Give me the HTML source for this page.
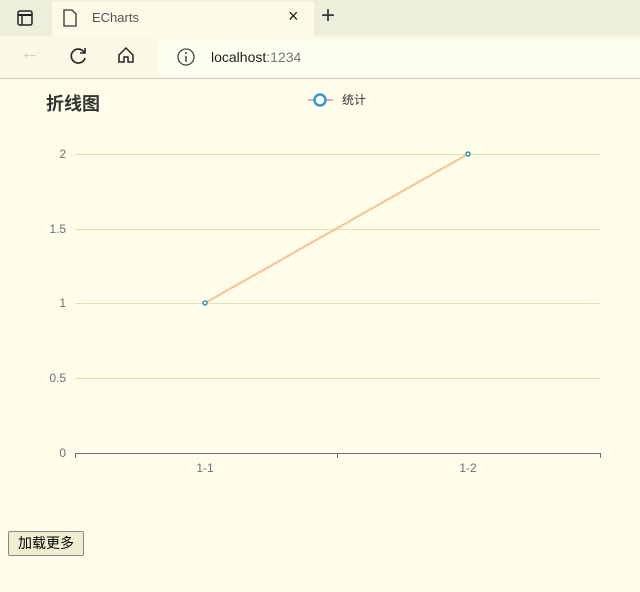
<!DOCTYPE html>
<html><head><meta charset="utf-8"><style>
body{margin:0;width:640px;height:592px;background:#fdfdea;font-family:"Liberation Sans","Noto Sans CJK SC",sans-serif;position:relative;overflow:hidden}
.tabs{position:absolute;top:0;left:0;width:640px;height:36px;background:#eeeedd}
.tab{position:absolute;left:52px;top:2px;width:262px;height:34px;background:#fbfbe8}
.nav{position:absolute;top:36px;left:0;width:640px;height:42px;background:#f9f9e6;border-bottom:1px solid #c8c8c0}
.url{position:absolute;left:158px;top:3px;width:482px;height:36px;background:#fdfdf0}
.t{position:absolute;white-space:nowrap}
</style></head><body>
<div class="tabs">
 <svg class="t" style="left:17px;top:10px" width="16" height="16"><rect x="1" y="1" width="14" height="14" rx="2" fill="none" stroke="#222" stroke-width="1.5"/><line x1="1" y1="5" x2="15" y2="5" stroke="#222" stroke-width="2"/><line x1="5" y1="5" x2="5" y2="15" stroke="#222" stroke-width="1.5"/></svg>
 <div class="tab">
  <svg class="t" style="left:11px;top:7px" width="14" height="18"><path d="M1 1h8l4 4v12H1z" fill="none" stroke="#333" stroke-width="1.3"/></svg>
  <div class="t" style="left:40px;top:8px;font-size:13px;color:#555">ECharts</div>
  <div class="t" style="left:236px;top:4px;font-size:18px;color:#222">×</div>
 </div>
 <div class="t" style="left:321px;top:2px;font-size:24px;color:#333;font-weight:300">+</div>
</div>
<div class="nav">
 <div class="t" style="left:20px;top:6px;font-size:20px;color:#ccc">←</div>
 <svg class="t" style="left:68px;top:10px" width="20" height="20"><path d="M16 6A7 7 0 1 0 17 12" fill="none" stroke="#222" stroke-width="1.6"/><path d="M17 2v5h-5" fill="none" stroke="#222" stroke-width="1.6"/></svg>
 <svg class="t" style="left:117px;top:10px" width="18" height="18"><path d="M2 9L9 2l7 7v7h-5v-5H7v5H2z" fill="none" stroke="#222" stroke-width="1.5"/></svg>
 <div class="url">
  <svg class="t" style="left:18px;top:8px" width="20" height="20"><circle cx="10" cy="10" r="8" fill="none" stroke="#444" stroke-width="1.3"/><line x1="10" y1="9" x2="10" y2="15" stroke="#444" stroke-width="1.5"/><circle cx="10" cy="6" r="1" fill="#444"/></svg>
  <div class="t" style="left:53px;top:10px;font-size:14px;color:#222">localhost<span style="color:#777">:1234</span></div>
 </div>
</div>
<div class="t" style="left:46px;top:90px;font-size:18px;font-weight:bold;color:#333">折线图</div>
<svg class="t" style="left:0;top:0" width="640" height="592">
 <line x1="308" y1="100" x2="333" y2="100" stroke="#f4a0b8" stroke-width="2"/>
 <circle cx="320" cy="100" r="5.5" fill="#fff" stroke="#2e9bd6" stroke-width="2.5"/>
 <g stroke="#e0e0b0" stroke-width="1">
 <line x1="75" y1="154.5" x2="600" y2="154.5"/><line x1="75" y1="229.5" x2="600" y2="229.5"/><line x1="75" y1="303.5" x2="600" y2="303.5"/><line x1="75" y1="378.5" x2="600" y2="378.5"/></g>
 <g stroke="#6e7079" stroke-width="1"><line x1="75" y1="453.5" x2="600" y2="453.5"/><line x1="75.5" y1="453" x2="75.5" y2="458"/><line x1="337.5" y1="453" x2="337.5" y2="458"/><line x1="600.5" y1="453" x2="600.5" y2="458"/></g>
 <line x1="205" y1="303" x2="468" y2="154" stroke="#fdc08e" stroke-width="2"/>
 <circle cx="205" cy="303" r="2" fill="#fff" stroke="#2e9bb0" stroke-width="1.5"/>
 <circle cx="468" cy="154" r="2" fill="#fff" stroke="#2e9bb0" stroke-width="1.5"/>
 <g font-family="Liberation Sans,sans-serif" font-size="12" fill="#6e7079" text-anchor="end">
 <text x="66" y="158">2</text><text x="66" y="233">1.5</text><text x="66" y="307">1</text><text x="66" y="382">0.5</text><text x="66" y="457">0</text></g>
 <g font-family="Liberation Sans,sans-serif" font-size="12" fill="#6e7079" text-anchor="middle"><text x="205" y="472">1-1</text><text x="468" y="472">1-2</text></g>
</svg>
<div class="t" style="left:342px;top:91px;font-size:12px;color:#333">统计</div>
<div class="t" style="left:8px;top:531px;width:74px;height:23px;border:1px solid #888;border-radius:2px;background:#eeeed0;font-size:14px;line-height:23px;text-align:center;color:#000">加载更多</div>
</body></html>
